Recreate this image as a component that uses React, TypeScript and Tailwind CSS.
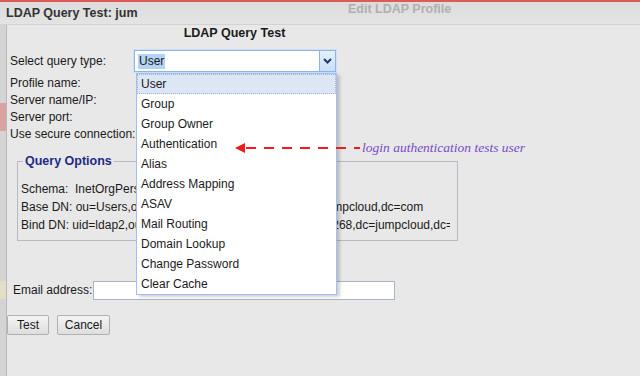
import React from 'react'

const items = [
  'User',
  'Group',
  'Group Owner',
  'Authentication',
  'Alias',
  'Address Mapping',
  'ASAV',
  'Mail Routing',
  'Domain Lookup',
  'Change Password',
  'Clear Cache',
]

function Row({ label }: { label: string }) {
  return (
    <div className="flex h-[17px] items-center whitespace-nowrap">
      <span>{label}</span>
    </div>
  )
}

export default function App() {
  return (
    <div className="relative h-[376px] w-[640px] overflow-hidden bg-[#e8e8e8] text-[12px] text-[#1a1a1a] font-['Liberation_Sans',Arial,sans-serif]">
      {/* title bar */}
      <div className="h-[2px] bg-[#e05a55]" />
      <div className="flex h-[23px] items-center border-b border-[#d2d2d2] bg-gradient-to-b from-[#dcdcdc] to-[#e4e4e4]">
        <span className="ml-[6px] w-[342px] font-bold text-[12.5px] text-[#333]">LDAP Query Test: jum</span>
        <span className="-mt-[7px] font-bold text-[12.5px] text-[#b0b0b0]">Edit LDAP Profile</span>
      </div>

      <div className="flex h-[351px]">
        {/* window behind */}
        <div className="w-[7px] border-r border-[#b8b8b8] bg-[#d4d4d4]">
          <div className="mt-[78px] h-[28px] bg-[#d9a3a3]" />
          <div className="mt-[150px] h-[18px] bg-[#e4ddc8]" />
        </div>

        <div className="w-[452px] pl-[3px]">
          <div className="pt-[1px] text-center font-bold text-[12.5px] leading-[14px]">LDAP Query Test</div>

          <div className="mt-[10px] flex h-[22px] items-center">
            <span className="w-[124px]">Select query type:</span>
            <div className="flex h-[22px] w-[202px] items-center border border-[#8db4e4] bg-white shadow-[0_0_0_1px_#cfe0f6]">
              <span className="ml-[3px] bg-[#b4d3f7] px-[1px] leading-[15px]">User</span>
              <div className="ml-auto flex h-full w-[16px] items-center justify-center border-l border-[#8db4e4] bg-gradient-to-b from-[#e6f0fc] to-[#c9def7]">
                <svg width="9" height="6" viewBox="0 0 9 6">
                  <path d="M1 1 L4.5 4.5 L8 1" stroke="#1f3a6e" strokeWidth="2" fill="none" />
                </svg>
              </div>
            </div>
          </div>

          <div className="mt-[2px]">
            <Row label="Profile name:" />
            <Row label="Server name/IP:" />
            <Row label="Server port:" />
            <Row label="Use secure connection:" />
          </div>

          <fieldset className="ml-[7px] mt-[10px] h-[89px] w-[441px] min-w-0 border border-[#b9b9c6] pl-[3px] pr-[7px]">
            <legend className="ml-[2px] px-[2px] font-bold text-[12.5px] text-[#1c2a86]">Query Options</legend>
            <div className="mt-[9px] overflow-hidden whitespace-nowrap leading-[18px]">
              <div>Schema:&nbsp; InetOrgPerson</div>
              <div>Base DN: ou=Users,o=5a37c8d1a9b2e4f0c1d2e268,dc=jumpcloud,dc=com</div>
              <div>Bind DN: uid=ldap2,ou=Users,o=5a37c8d1a9b2e4f0c1d2e268,dc=jumpcloud,dc=com</div>
            </div>
          </fieldset>

          <div className="mt-[39px] flex h-[20px] items-center">
            <span className="ml-[3px] w-[80px]">Email address:</span>
            <div className="h-[19px] w-[302px] border border-[#a9b3c9] bg-white" />
          </div>

          <div className="-ml-[3px] mt-[15px] flex gap-[8px]">
            <button className="h-[20px] w-[42px] rounded-[2px] border border-[#b0b0b0] bg-gradient-to-b from-[#f4f4f4] to-[#dedede] text-[12px]">Test</button>
            <button className="h-[20px] w-[53px] rounded-[2px] border border-[#b0b0b0] bg-gradient-to-b from-[#f4f4f4] to-[#dedede] text-[12px]">Cancel</button>
          </div>
        </div>
      </div>

      {/* open dropdown list */}
      <div className="absolute left-[136px] top-[73px] w-[201px] border border-[#9fc1ef] bg-white shadow-[3px_2px_3px_rgba(0,0,0,0.18)]">
        {items.map((item, i) => (
          <div
            key={item}
            className={
              i === 0
                ? 'flex h-[20px] items-center border border-dotted border-[#9fb6dc] bg-[#dde6f5] pl-[3px]'
                : 'flex h-[20px] items-center pl-[4px]'
            }
          >
            {item}
          </div>
        ))}
      </div>

      {/* annotation */}
      <div className="absolute left-[234px] top-[138px] flex items-center">
        <svg width="126" height="12" viewBox="0 0 126 12">
          <polygon points="1,6 11,1 11,11" fill="#ee1c1c" />
          <line x1="12" y1="6" x2="126" y2="6" stroke="#ee1c1c" strokeWidth="2.2" strokeDasharray="10 8" />
        </svg>
        <span className="ml-[2px] italic text-[13.5px] text-[#7a4ac6] font-['Liberation_Serif',serif]">login authentication tests user</span>
      </div>
    </div>
  )
}
